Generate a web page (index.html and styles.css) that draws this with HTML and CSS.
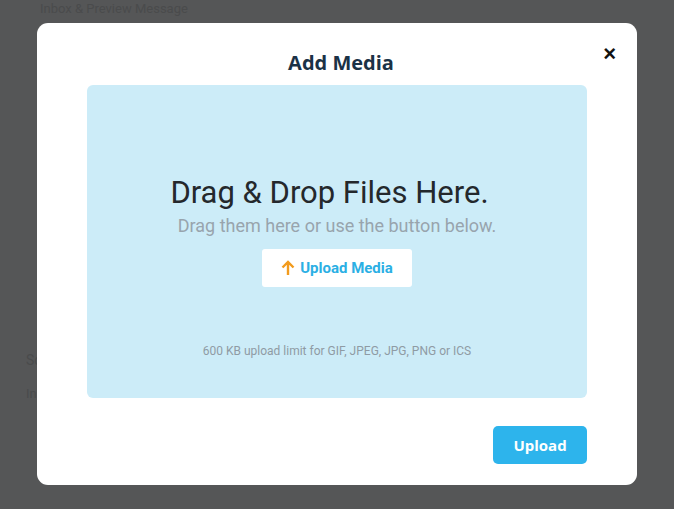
FILE: index.html
```html
<!DOCTYPE html>
<html lang="en">

<head>
    <meta charset="UTF-8">
    <meta name="viewport" content="width=device-width, initial-scale=1.0">
    <title>Add Media</title>
    <link rel="stylesheet" href="styles.css">
</head>

<body>
    <div class="pagina">
        <p class="textoFondo arriba">Inbox &amp; Preview Message</p>
        <p class="textoFondo sub">Schedule</p>
        <p class="textoFondo sub2">Include</p>
    </div>

    <div class="capa">
        <div class="modal">
            <h2 class="titulo">Add Media</h2>
            <button class="cerrar">&times;</button>

            <div class="zona">
                <h1 class="zonaTitulo">Drag &amp; Drop Files Here.</h1>
                <p class="zonaSub">Drag them here or use the button below.</p>
                <button class="botonMedia">
                    <svg width="14" height="16" viewBox="0 0 14 16">
                        <path d="M7 15V2M1.5 7.5L7 2l5.5 5.5" fill="none" stroke="#f29b1d" stroke-width="2.4" />
                    </svg>
                    Upload Media
                </button>
                <p class="limite">600 KB upload limit for GIF, JPEG, JPG, PNG or ICS</p>
            </div>

            <div class="pie">
                <button class="botonSubir">Upload</button>
            </div>
        </div>
    </div>
</body>

</html>
```

FILE: styles.css
```css
body {
    margin: 0;
    background: #555657;
    font-family: 'Roboto', sans-serif;
    height: 509px;
    overflow: hidden;
}

.pagina {
    padding: 0 26px;
}

.textoFondo {
    margin: 0;
    color: #4a4b4c;
    font-size: 13px;
}

.arriba {
    padding: 1px 0 0 14px;
}

.sub {
    margin-top: 336px;
    font-size: 14px;
}

.sub2 {
    margin-top: 18px;
}

.capa {
    position: fixed;
    top: 0;
    left: 0;
    right: 0;
    bottom: 0;
    display: flex;
    justify-content: center;
    padding-top: 23px;
}

.modal {
    position: relative;
    width: 600px;
    height: 462px;
    box-sizing: border-box;
    background: #fff;
    border-radius: 11px;
    padding: 0 50px;
}

.titulo {
    margin: 0;
    padding: 27px 0 0 8px;
    height: 35px;
    text-align: center;
    font-family: 'Open Sans', sans-serif;
    font-size: 20px;
    font-weight: 700;
    color: #1b3246;
    line-height: 26px;
}

.cerrar {
    position: absolute;
    top: 20px;
    right: 21px;
    border: none;
    background: none;
    font-size: 22px;
    font-weight: 700;
    color: #111;
    padding: 0;
    line-height: 22px;
    cursor: pointer;
}

.zona {
    height: 313px;
    box-sizing: border-box;
    background: #ccecf8;
    border-radius: 6px;
    display: flex;
    flex-direction: column;
    align-items: center;
    padding-top: 89px;
}

.zonaTitulo {
    margin: 0;
    padding-right: 15px;
    font-size: 31px;
    font-weight: 400;
    color: #24282c;
    line-height: 38px;
}

.zonaSub {
    margin: 0;
    padding-top: 2px;
    font-size: 18px;
    color: #98a4ad;
    line-height: 24px;
}

.botonMedia {
    margin-top: 11px;
    width: 150px;
    height: 38px;
    border: none;
    border-radius: 3px;
    background: #fff;
    color: #2bafe4;
    font-family: 'Roboto', sans-serif;
    font-size: 15px;
    font-weight: 700;
    display: flex;
    align-items: center;
    justify-content: center;
    gap: 5px;
}

.limite {
    margin: 57px 0 0;
    font-size: 12px;
    color: #8f9ba4;
}

.pie {
    display: flex;
    justify-content: flex-end;
    padding-top: 28px;
}

.botonSubir {
    width: 94px;
    height: 38px;
    border: none;
    border-radius: 5px;
    background: #2db4ec;
    color: #fff;
    font-family: 'Open Sans', sans-serif;
    font-size: 15px;
    font-weight: 700;
}
```
